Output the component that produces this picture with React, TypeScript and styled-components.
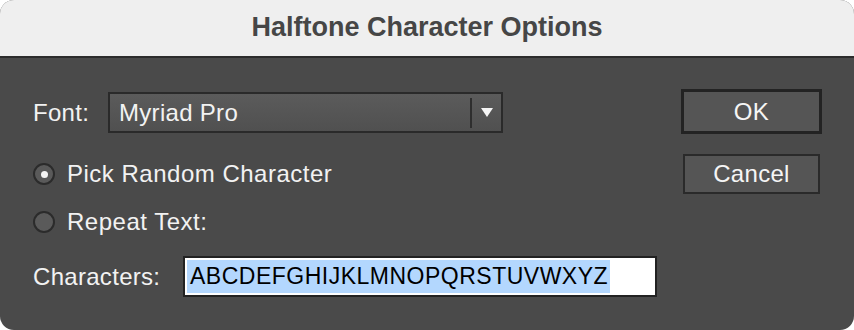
import React from "react";
import styled, { createGlobalStyle } from "styled-components";

const Global = createGlobalStyle`
  html, body { margin: 0; padding: 0; background: #ffffff; }
  body { font-family: "Liberation Sans", Arial, sans-serif; }
`;

const Window = styled.div`
  width: 854px;
  height: 330px;
  border-radius: 14px;
  overflow: hidden;
  background: #4a4a4a;
  display: flex;
  flex-direction: column;
`;

const TitleBar = styled.div`
  height: 55px;
  flex: none;
  background: #efefef;
  border-bottom: 2px solid #2c2c2c;
  display: flex;
  align-items: center;
  justify-content: center;
  font-size: 27px;
  font-weight: bold;
  color: #464646;
  padding-bottom: 1px;
  box-sizing: content-box;
`;

const Body = styled.div`
  flex: 1;
  display: flex;
  justify-content: space-between;
  padding: 34px 32px 0 33px;
  color: #f2f2f2;
  font-size: 24px;
`;

const LeftCol = styled.div`
  display: flex;
  flex-direction: column;
`;

const Row = styled.div<{ $top?: number; $h: number }>`
  display: flex;
  align-items: center;
  height: ${(p) => p.$h}px;
  margin-top: ${(p) => p.$top ?? 0}px;
`;

const Label = styled.span<{ $w: number }>`
  width: ${(p) => p.$w}px;
  flex: none;
  letter-spacing: 0.3px;
`;

const Select = styled.div`
  width: 395px;
  height: 41px;
  box-sizing: border-box;
  border: 2px solid #2a2a2a;
  background: linear-gradient(#5b5b5b, #505050);
  display: flex;
  align-items: center;
  padding-left: 9px;
`;

const SelectValue = styled.span`
  flex: 1;
  letter-spacing: 0.3px;
`;

const Divider = styled.span`
  width: 2px;
  height: 30px;
  background: #2e2e2e;
  margin-right: 9px;
`;

const Caret = styled.span`
  width: 0;
  height: 0;
  border-left: 6px solid transparent;
  border-right: 6px solid transparent;
  border-top: 9px solid #f5f5f5;
  margin-right: 8px;
`;

const Radio = styled.span<{ $checked?: boolean }>`
  width: 22px;
  height: 22px;
  box-sizing: border-box;
  border-radius: 50%;
  border: 2px solid #2b2b2b;
  background: #5a5a5a;
  display: flex;
  align-items: center;
  justify-content: center;
  margin-right: 12px;
  flex: none;
  &::after {
    content: "";
    display: ${(p) => (p.$checked ? "block" : "none")};
    width: 7px;
    height: 7px;
    border-radius: 50%;
    background: #f5f5f5;
  }
`;

const RadioText = styled.span`
  letter-spacing: 0.5px;
`;

const Input = styled.div`
  width: 474px;
  height: 41px;
  box-sizing: border-box;
  border: 2px solid #222;
  background: #ffffff;
  display: flex;
  align-items: center;
  padding-left: 2px;
`;

const Selected = styled.span`
  background: #b3d7fe;
  color: #000;
  font-size: 23px;
  line-height: 33px;
  padding: 0 2px 0 3px;
  letter-spacing: 0.5px;
`;

const RightCol = styled.div`
  display: flex;
  flex-direction: column;
  align-items: center;
  gap: 20px;
  margin-top: -3px;
`;

const Button = styled.div<{ $default?: boolean }>`
  width: ${(p) => (p.$default ? 141 : 137)}px;
  height: ${(p) => (p.$default ? 45 : 40)}px;
  box-sizing: border-box;
  border: ${(p) => (p.$default ? "3px solid #232323" : "2px solid #2a2a2a")};
  background: #555555;
  display: flex;
  align-items: center;
  justify-content: center;
  color: #f5f5f5;
  font-size: 24px;
  letter-spacing: 0.3px;
`;

export default function App() {
  return (
    <>
      <Global />
      <Window>
        <TitleBar>Halftone Character Options</TitleBar>
        <Body>
          <LeftCol>
            <Row $h={41}>
              <Label $w={75}>Font:</Label>
              <Select>
                <SelectValue>Myriad Pro</SelectValue>
                <Divider />
                <Caret />
              </Select>
            </Row>
            <Row $h={28} $top={27}>
              <Radio $checked />
              <RadioText>Pick Random Character</RadioText>
            </Row>
            <Row $h={28} $top={20}>
              <Radio />
              <RadioText>Repeat Text:</RadioText>
            </Row>
            <Row $h={41} $top={20}>
              <Label $w={150}>Characters:</Label>
              <Input>
                <Selected>ABCDEFGHIJKLMNOPQRSTUVWXYZ</Selected>
              </Input>
            </Row>
          </LeftCol>
          <RightCol>
            <Button $default>OK</Button>
            <Button>Cancel</Button>
          </RightCol>
        </Body>
      </Window>
    </>
  );
}
